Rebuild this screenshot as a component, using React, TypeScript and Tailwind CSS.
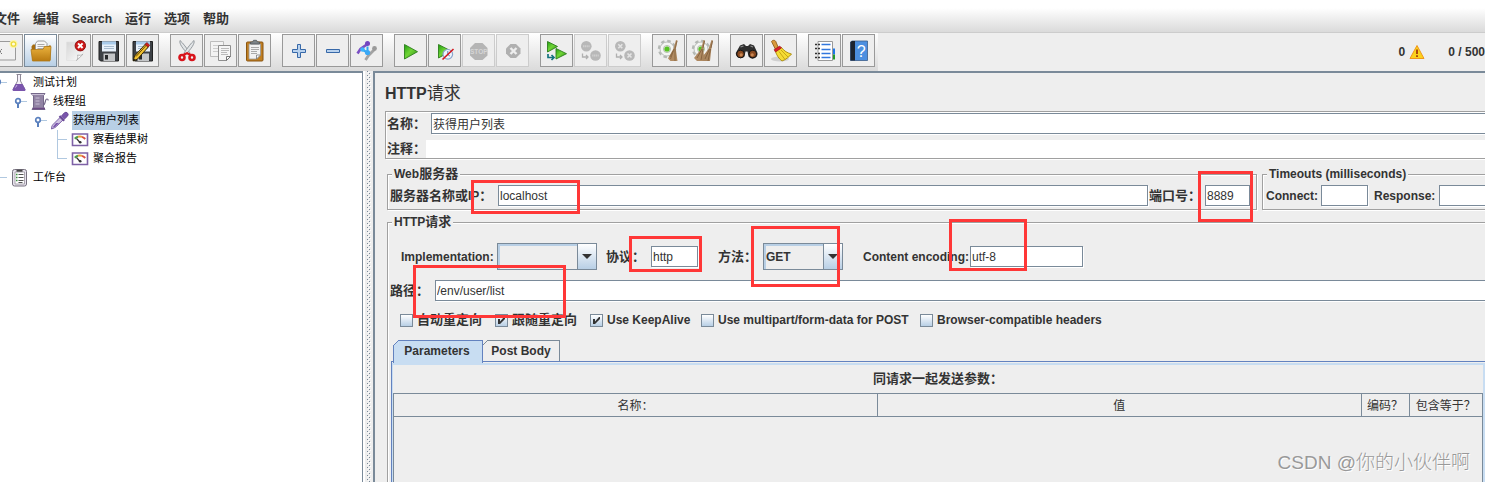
import { ReactNode } from "react";
import clsx from "clsx";

/* ---------- toolbar icons (23 x 23) ---------- */

function Svg({ children, size = 23 }: { children: ReactNode; size?: number }) {
  return (
    <svg width={size} height={size} viewBox={`0 0 ${size} ${size}`} fill="none" aria-hidden="true">
      {children}
    </svg>
  );
}

function Gradients() {
  return (
    <svg width="0" height="0" className="absolute" aria-hidden="true">
      <defs>
        <linearGradient id="green" x1="0" y1="0" x2="1" y2="1">
          <stop offset="0" stopColor="#1f9e10" />
          <stop offset="0.45" stopColor="#6fd435" />
          <stop offset="1" stopColor="#2f8f14" />
        </linearGradient>
        <linearGradient id="paper" x1="0" y1="0" x2="1" y2="1">
          <stop offset="0" stopColor="#d6d6d6" />
          <stop offset="1" stopColor="#fcfcfc" />
        </linearGradient>
        <linearGradient id="gold" x1="0" y1="0" x2="0" y2="1">
          <stop offset="0" stopColor="#e9b13d" />
          <stop offset="1" stopColor="#b97a10" />
        </linearGradient>
      </defs>
    </svg>
  );
}

function TemplatesIcon() {
  return (
    <Svg>
      <path d="M0 2.500h20.500v18.500H0z" fill="#f0f0f0" stroke="#9a9a9a" />
      <path d="M6.500 10v1M5.500 11.500v2M6.500 14v1" stroke="#777" />
      <circle cx="18.500" cy="5" r="4" fill="#fdf6a8" />
      <circle cx="18.500" cy="5" r="2.200" fill="#fffde0" stroke="#ecd93c" strokeWidth="1.300" />
    </Svg>
  );
}

function OpenIcon() {
  return (
    <Svg>
      <path d="M2.500 7.500 4 5.500h4v6h10v-4l3.500-1.500v15h-18z" fill="#a56c10" />
      <path d="M6.500 4.500 8.500 2h7l2.500 2.500v9h-11.500z" fill="#f6f6f6" stroke="#9a9a9a" />
      <path d="M8.500 5.500h7M8.500 7.500h8M8.500 9.500h8" stroke="#aaa" />
      <path d="M2 10.500h12l1.500-3h6.500L21 22H3.500z" fill="url(#gold)" stroke="#b07a18" strokeWidth="0.800" />
    </Svg>
  );
}

function CloseFileIcon() {
  return (
    <Svg>
      <path d="M3.500 3h16.500v12l-6 6.500H3.500z" fill="url(#paper)" stroke="#e2e2e2" strokeWidth="0.800" />
      <path d="M13.500 21.500c1.500-2 1.500-3.500 1-5.500 2 .6 3.800.3 5.500-.8z" fill="#fff" stroke="#aaa" strokeWidth="0.800" />
      <circle cx="17.300" cy="6.700" r="5.200" fill="#cf1717" stroke="#8e1010" />
      <path d="m15 4.400 4.600 4.600m0-4.600L15 9" stroke="#fff" strokeWidth="2" />
    </Svg>
  );
}

function Floppy() {
  return (
    <>
      <path d="M2 2.500h19.500V22H3.500L2 20.500z" fill="#3d4146" stroke="#222" />
      <path d="M5 2.500h14v10H5z" fill="#e8f1fa" />
      <path d="M5 2.500h14v3H5z" fill="#a9cbea" />
      <path d="M7 7.500h10M7 9.500h10" stroke="#a8bccf" />
      <path d="M6.500 14.500h11.500V22H6.500z" fill="#c4c6c8" />
      <path d="M8 16h3v4.500H8z" fill="#26282b" />
    </>
  );
}

function SaveIcon() {
  return (
    <Svg>
      <Floppy />
    </Svg>
  );
}

function SaveAsIcon() {
  return (
    <Svg>
      <Floppy />
      <path d="m2 22 1.600-5L14.500 5l3 2.700L6.600 20z" fill="#f1c232" stroke="#3a2b06" strokeWidth="1" />
      <path d="m5 17.500 10.500-11.500" stroke="#6b4a05" />
      <path d="m14 5.500 1.800-2 3 2.700-1.800 2z" fill="#cf1c1c" stroke="#701010" strokeWidth="0.600" />
      <path d="m2 22 .8-2.600 1.600 1.500z" fill="#111" />
    </Svg>
  );
}

function CutIcon() {
  return (
    <Svg>
      <path d="M5 1.500c-1 3 2.500 8 8.500 14l1.500-1.500C11.500 9 8 4 5 1.500z" fill="#e2e5e7" stroke="#8b9297" strokeWidth="0.900" />
      <path d="M19 1.500c1 3-2.500 8-8.500 14L9 14C12.500 9 16 4 19 1.500z" fill="#e2e5e7" stroke="#8b9297" strokeWidth="0.900" />
      <ellipse cx="7" cy="18.500" rx="2.500" ry="2.500" stroke="#d8141c" strokeWidth="2.600" />
      <ellipse cx="17" cy="18.500" rx="2.500" ry="2.500" stroke="#d8141c" strokeWidth="2.600" />
      <path d="m8 16 4-1.700 4 1.700" stroke="#d8141c" strokeWidth="2.200" />
    </Svg>
  );
}

function CopyIcon() {
  return (
    <Svg>
      <path d="M1.500 2.500h13v15h-13z" fill="#f3f3f3" stroke="#bdbdbd" />
      <path d="M4 6.500h7M4 9.500h5M4 12.500h5" stroke="#ccc" />
      <path d="M9.500 6.500h12v11l-4 4h-8z" fill="#f5f5f5" stroke="#8e8e8e" />
      <path d="M12 9.500h8M12 11.500h8M12 13.500h6M12 15.500h7" stroke="#bbb" />
      <path d="M17.500 21.500v-4h4z" fill="#fff" stroke="#777" />
    </Svg>
  );
}

function PasteIcon() {
  return (
    <Svg>
      <rect x="3.500" y="3" width="16.500" height="19" rx="1" fill="#c07f22" stroke="#8a5510" />
      <path d="M6 5h11.500v11l-4 4H6z" fill="#f2f2f2" stroke="#999" strokeWidth="0.800" />
      <path d="M8 8.500h8M8 10.500h8M8 12.500h6M8 14.500h6" stroke="#aaa" />
      <path d="M13.500 20v-4h4z" fill="#fff" stroke="#777" strokeWidth="0.800" />
      <path d="M7.500 5V3h2l1-1.700h3l1 1.700h2v2z" fill="#7d8488" stroke="#50575b" strokeWidth="0.800" />
    </Svg>
  );
}

function PlusIcon() {
  return (
    <Svg>
      <path d="M10.500 5.500h3v5h5v3h-5v5h-3v-5h-5v-3h5z" fill="#b9d2ee" stroke="#3768a8" />
    </Svg>
  );
}

function MinusIcon() {
  return (
    <Svg>
      <path d="M5.500 10.500h13v3h-13z" fill="#b9d2ee" stroke="#3768a8" />
    </Svg>
  );
}

function ToggleIcon() {
  return (
    <Svg>
      <path d="m2.500 14.500 3-4.500 7-5" stroke="#7a4fc4" strokeWidth="2.600" />
      <circle cx="12.500" cy="4.500" r="2.500" fill="#7344c0" />
      <path d="m10.500 21 3-4.500 6-6" stroke="#a3a3a3" strokeWidth="2.800" />
      <circle cx="19.500" cy="9.500" r="2.400" fill="#9a9a9a" />
      <path d="m7 10.500 5.500 3M12.500 7.500v6" stroke="#2fa4f2" strokeWidth="2" />
      <circle cx="7.500" cy="10.500" r="2.300" fill="#3db3fb" />
      <circle cx="12.500" cy="13.500" r="2.600" fill="#3aa8f5" />
    </Svg>
  );
}

function PlayIcon() {
  return (
    <Svg>
      <path d="M5.500 5.500v14.500L18.500 12.700z" fill="url(#green)" stroke="#2c7d1c" strokeWidth="0.900" />
    </Svg>
  );
}

function PlayNoTimerIcon() {
  return (
    <Svg>
      <path d="M5.500 5.500v13.500L18 12z" fill="url(#green)" stroke="#2c7d1c" strokeWidth="0.900" />
      <circle cx="14.800" cy="15.300" r="4.800" fill="#eef4fc" stroke="#8aa4cc" strokeWidth="1.200" />
      <path d="M14.800 12v3.500l2 1.500" stroke="#5b7db5" />
      <path d="M9.500 20.500 20.500 10" stroke="#d3141b" strokeWidth="1.600" />
    </Svg>
  );
}

function StopIcon() {
  return (
    <Svg>
      <path d="M8 4h7.500l5 5v7.500l-5 4.500H8l-5-4.500V9z" fill="#b5b5b5" />
      <text x="11.800" y="14.900" textAnchor="middle" fontSize="6.500" fontWeight="bold" fontFamily="Liberation Sans" fill="#d6d6d6">
        STOP
      </text>
    </Svg>
  );
}

function ShutdownIcon() {
  return (
    <Svg>
      <path d="M9.500 5h5.500l4.500 4.500v5L15 19H9.500L5 14.500v-5z" fill="#b0b0b0" />
      <path d="m9.500 9 6 6m0-6-6 6" stroke="#eee" strokeWidth="2.400" />
    </Svg>
  );
}

function RemoteStartIcon() {
  return (
    <Svg>
      <path d="M2.500 2.500v10.500L12.500 7.500z" fill="url(#green)" stroke="#2c7d1c" strokeWidth="0.900" />
      <path d="M11 9.500v10.500L21.500 14.700z" fill="url(#green)" stroke="#2c7d1c" strokeWidth="0.900" />
      <path d="M3 15v3.500h5M6.500 16l2.500 2.500L6.500 21" stroke="#15737f" strokeWidth="1.700" />
    </Svg>
  );
}

function RemoteStopIcon({ cross }: { cross?: boolean }) {
  return (
    <Svg>
      <circle cx="7.300" cy="7.300" r="5.300" fill="#b8b8b8" />
      <circle cx="16.500" cy="16.500" r="5.300" fill="#b8b8b8" />
      {cross ? (
        <path d="m5.300 5.300 4 4m0-4-4 4M14.500 14.500l4 4m0-4-4 4" stroke="#e4e4e4" strokeWidth="1.600" />
      ) : (
        <path d="M4 7.300h6.600M13.200 16.500h6.600" stroke="#cfcfcf" strokeWidth="2" strokeDasharray="1.300 0.500" />
      )}
      <path d="M3.500 14.500v3.500h5M7 16l2 2-2 2" stroke="#b0b0b0" strokeWidth="1.300" />
    </Svg>
  );
}

function Gear() {
  return (
    <>
      <circle cx="10" cy="10" r="8" stroke="#b4b8b4" strokeWidth="2.400" strokeDasharray="3.500 2.780" />
      <circle cx="10" cy="10" r="7" fill="#f4f5f3" stroke="#b4b8b4" strokeWidth="0.900" />
      <circle cx="10" cy="10" r="3.600" fill="#dde5d8" stroke="#a5ad9f" strokeWidth="0.700" />
      <circle cx="10" cy="10" r="2.600" fill="#58c322" />
    </>
  );
}

function ClearIcon() {
  return (
    <Svg>
      <Gear />
      <path d="m19 1 1.500.5-1.700 8.500 1.700 12h-7L11 19.500 16.500 9.500z" fill="#b08a62" />
      <path d="m17 10-3.500 10M18 10v12M16 12l-3 6M20 2l-2 8" stroke="#7d5b38" strokeWidth="0.700" />
    </Svg>
  );
}

function ClearAllIcon() {
  return (
    <Svg>
      <Gear />
      <path d="m12.500 1 1.500.5-1.700 8.500 1.200 12H6L3 19l7-9z" fill="#b08a62" />
      <path d="m20.500 1 1.500.5-1.700 8.500L19 22h-7l-1.500-3 7-9z" fill="#a9845d" />
      <path d="m11 10-5 9M12 10l-2 11M18.500 10 14 20M19.500 10 17 22M13.500 2 12 9M21.500 2 20 9" stroke="#775534" strokeWidth="0.700" />
    </Svg>
  );
}

function SearchIcon() {
  return (
    <Svg>
      <path d="M5 6.500 9 5l2 2h2l2-2 4 1.500L22.500 14a5 5 0 0 1-9 3.500l-1-5h-2l-1 5A5 5 0 0 1 .8 14z" fill="#2e2e2e" />
      <path d="m5.500 8 3-1M18 8l-2.500-1" stroke="#8d8d8d" strokeWidth="1.200" />
      <circle cx="5.500" cy="15" r="3.800" fill="#8a4a20" stroke="#151515" />
      <circle cx="17.800" cy="15" r="3.800" fill="#8a4a20" stroke="#151515" />
      <circle cx="6.200" cy="15.800" r="1.600" fill="#c98752" />
      <circle cx="17.200" cy="15.800" r="1.600" fill="#c98752" />
    </Svg>
  );
}

function BroomIcon() {
  return (
    <Svg>
      <ellipse cx="11" cy="20" rx="9" ry="2.500" fill="#cfcfcf" />
      <path d="M2.500 2.500c1.500-2 4-1.300 4.500.5l2.500 6-3 1.500z" fill="#d99a3c" stroke="#8a5510" strokeWidth="0.800" />
      <path d="M6.500 12.500 12.500 8.500c2.500 3.500 6 5.500 10 6.500-2.500 3-5.500 5.500-9.500 7-3-2-5.500-6-6.500-9.500z" fill="#f5dc35" stroke="#a88a0c" strokeWidth="0.900" />
      <path d="m10 12.500 6 8M12 11l7 7" stroke="#c9a814" />
      <path d="m5 10.700 5.700-3.700 1.800 2-6 4z" fill="#d8202a" stroke="#9c1018" strokeWidth="0.600" />
    </Svg>
  );
}

function FunctionHelperIcon() {
  return (
    <Svg>
      <path d="M19 9.500h3v6h-3z" fill="#1d76e8" />
      <path d="M19 15.500h3v5h-3z" fill="#249a2c" />
      <path d="M5 2.500h14.500v19H5z" fill="#fff" stroke="#999" />
      <path d="M8.500 5.500h9M8.500 10.500h9M8.500 14.500h9M8.500 18.500h9" stroke="#3277dd" strokeWidth="1.300" />
      <path d="M2 5.500h5M2 9.500h5M2 14.500h5M2 18.500h5" stroke="#333" strokeWidth="1.600" strokeDasharray="2 1" />
    </Svg>
  );
}

function HelpIcon() {
  return (
    <Svg>
      <path d="M3.500 3 5 2h15.500v19.500H3.500z" fill="#4c8fe0" stroke="#3b5d8a" strokeWidth="0.800" />
      <path d="M3.500 3 5 2h3v19.500H3.500z" fill="#1c2430" />
      <text x="14.200" y="17.500" textAnchor="middle" fontSize="16" fontFamily="Liberation Sans" fill="#fff">
        ?
      </text>
    </Svg>
  );
}

interface Tool {
  name: string;
  icon: ReactNode;
  active?: boolean;
  disabled?: boolean;
}

const toolGroups: Tool[][] = [
  [
    { name: "Templates", icon: <TemplatesIcon /> },
    { name: "Open", icon: <OpenIcon />, active: true },
    { name: "Close", icon: <CloseFileIcon /> },
    { name: "Save", icon: <SaveIcon /> },
    { name: "Save as", icon: <SaveAsIcon /> },
  ],
  [
    { name: "Cut", icon: <CutIcon /> },
    { name: "Copy", icon: <CopyIcon /> },
    { name: "Paste", icon: <PasteIcon /> },
  ],
  [
    { name: "Expand all", icon: <PlusIcon /> },
    { name: "Collapse all", icon: <MinusIcon /> },
    { name: "Toggle", icon: <ToggleIcon /> },
  ],
  [
    { name: "Start", icon: <PlayIcon /> },
    { name: "Start no pauses", icon: <PlayNoTimerIcon /> },
    { name: "Stop", icon: <StopIcon />, disabled: true },
    { name: "Shutdown", icon: <ShutdownIcon />, disabled: true },
  ],
  [
    { name: "Remote start all", icon: <RemoteStartIcon /> },
    { name: "Remote stop all", icon: <RemoteStopIcon />, disabled: true },
    { name: "Remote shutdown all", icon: <RemoteStopIcon cross />, disabled: true },
  ],
  [
    { name: "Clear", icon: <ClearIcon /> },
    { name: "Clear all", icon: <ClearAllIcon /> },
  ],
  [
    { name: "Find", icon: <SearchIcon /> },
    { name: "Reset search", icon: <BroomIcon /> },
  ],
  [
    { name: "Function helper", icon: <FunctionHelperIcon /> },
    { name: "Help", icon: <HelpIcon /> },
  ],
];

function MenuBar() {
  const items = ["文件", "编辑", "Search", "运行", "选项", "帮助"];
  return (
    <nav className="flex h-[33px] shrink-0 items-center gap-[13px] border-b border-[#ccc] bg-linear-to-b from-white from-25% to-[#dadada] pt-[6px]">
      {items.map((item, i) => (
        <button
          key={item}
          className={clsx("shrink-0 font-bold", item === "Search" ? "text-[12px]" : "text-[13px]", i === 0 && "-ml-[6px]")}
        >
          {item}
        </button>
      ))}
    </nav>
  );
}

function ToolBar() {
  return (
    <div className="flex h-[38px] shrink-0 items-center justify-between">
      <div className="-ml-[10px] flex h-full shrink-0 gap-[11px] bg-linear-to-b from-white to-[#dadada] pt-px pr-[3px]">
        {toolGroups.map((group, i) => (
          <div key={i} className="flex gap-px">
            {group.map((tool) => (
              <button
                key={tool.name}
                title={tool.name}
                disabled={tool.disabled}
                className={clsx(
                  "flex size-[33px] items-center justify-center border",
                  tool.active && "border-[#7a8a99] bg-linear-to-b from-white to-[#b8cfe5]",
                  tool.disabled && "border-[#ccc] bg-[#eee]",
                  !tool.active && !tool.disabled && "border-[#999] bg-[#eee]"
                )}
              >
                {tool.icon}
              </button>
            ))}
          </div>
        ))}
      </div>
      <div className="flex shrink-0 items-center text-[12px] font-bold">
        <span>0</span>
        <svg width="16" height="16" viewBox="0 0 16 16" className="mr-[23px] ml-1" aria-hidden="true">
          <path d="M8 1.500 15 14.500H1z" fill="#fbd21c" stroke="#f0971a" strokeLinejoin="round" />
          <path d="M8 5.500v4.500M8 11.300v1.700" stroke="#a8420c" strokeWidth="1.900" />
        </svg>
        <span>0 / 500</span>
      </div>
    </div>
  );
}

/* ---------- test plan tree ---------- */

function FlaskIcon() {
  return (
    <Svg size={19}>
      <path d="M6.500 1.500h5M7.500 2v6L3 16.500h12L10.500 8V2" fill="#f4f0f8" stroke="#8d8896" />
      <path d="M5.500 11h7l3 5.500c0 1-.5 1.500-1.500 1.500H4c-1 0-1.500-.5-1.500-1.500z" fill="#7a55ac" />
      <path d="M5.500 14.500 7 12" stroke="#c7b2e4" />
    </Svg>
  );
}

function BeakerIcon() {
  return (
    <Svg size={19}>
      <path d="M1 1.500h14l-1.500 2V15l1.500 2.500H2L3.500 15V4z" fill="#9284a4" stroke="#75688a" />
      <path d="M2 2.500h12M5.500 6h4M5.500 9h4M5.500 12h4" stroke="#c9bfd6" />
      <path d="M3 16.500h12" stroke="#6d4b84" strokeWidth="1.500" />
      <path d="M13 13c3 0 1.500-6 4-6 .8 0 1.200.6 1.200 1.500" stroke="#75688a" strokeWidth="1.200" />
    </Svg>
  );
}

function PipetteIcon() {
  return (
    <Svg size={19}>
      <path d="M1.500 18c0-3 1-4 2-5l7-7 2.700 2.700-7 7c-1 1-2.500 1.300-4.700 2.300z" fill="#cfc2e2" stroke="#7d62a8" />
      <path d="m2.500 16.500 3.500-4.500 3 0-4 4z" fill="#7a55ac" />
      <path d="m9.500 5 4.700 4.700" stroke="#6a4a98" strokeWidth="2.200" />
      <path d="m11.500 5 3-3.300a2.300 2.300 0 0 1 3.200 3.200L14.500 8z" fill="#7a55ac" stroke="#6a4a98" />
    </Svg>
  );
}

function ReportIcon() {
  return (
    <Svg size={19}>
      <path d="M2.500 4h15v11.500h-15z" fill="#fff" stroke="#7e61a6" strokeWidth="1.600" />
      <path d="M4.800 8.800C6 7.500 6.800 7 8 6.700" stroke="#4c9c4a" strokeWidth="2" />
      <path d="M8 6.800c1.500-.4 3-.3 4 .1" stroke="#e6a03a" strokeWidth="2" />
      <path d="M12 6.900c1.500.5 2.300 1.100 3.200 2.100" stroke="#db5244" strokeWidth="2" />
      <path d="m6.500 8.500 3.500 4" stroke="#333" strokeWidth="1.200" />
      <circle cx="10.200" cy="12.300" r="1.300" fill="#333" />
    </Svg>
  );
}

function WorkbenchIcon() {
  return (
    <Svg size={19}>
      <rect x="2.500" y="1.500" width="14" height="16.500" rx="2" fill="#e6e2ec" stroke="#77717f" />
      <path d="M5 4h9.500v12H5z" fill="#fff" stroke="#99949f" strokeWidth="0.800" />
      <path d="M6.500 2.700h6" stroke="#444" strokeWidth="2" />
      <path d="M8.500 6.500h5M8.500 9.500h5M8.500 12.500h5M8.500 14.500h4" stroke="#555" />
      <path d="M6 6.500h1.500M6 9.500h1.500M6 12.500h1.500" stroke="#3e9440" strokeWidth="1.400" />
    </Svg>
  );
}

type Branch = "handle" | "tee" | "corner" | "line";

function Connector({ kind }: { kind: Branch }) {
  return (
    <svg width="20" height="19" viewBox="0 0 20 19" fill="none" className="shrink-0" aria-hidden="true">
      <path d="M8 9.500h9" stroke="#b0c8e0" />
      {kind === "tee" && <path d="M7.500 0v19" stroke="#b0c8e0" />}
      {kind === "corner" && <path d="M7.500 0v10" stroke="#b0c8e0" />}
      {kind === "handle" && (
        <>
          <path d="M8 11v5" stroke="#5a80be" strokeWidth="2" />
          <circle cx="8" cy="9" r="2.300" fill="#fff" stroke="#5a80be" strokeWidth="1.700" />
        </>
      )}
    </svg>
  );
}

const nodes: { label: string; indent: string; branch: Branch; icon: ReactNode; selected?: boolean }[] = [
  { label: "测试计划", indent: "-ml-[10px]", branch: "handle", icon: <FlaskIcon /> },
  { label: "线程组", indent: "ml-[10px]", branch: "handle", icon: <BeakerIcon /> },
  { label: "获得用户列表", indent: "ml-[30px]", branch: "handle", icon: <PipetteIcon />, selected: true },
  { label: "察看结果树", indent: "ml-[50px]", branch: "tee", icon: <ReportIcon /> },
  { label: "聚合报告", indent: "ml-[50px]", branch: "corner", icon: <ReportIcon /> },
  { label: "工作台", indent: "-ml-[10px]", branch: "line", icon: <WorkbenchIcon /> },
];

function TestPlanTree() {
  return (
    <ul className="w-[363px] shrink-0 overflow-hidden border-t-2 border-r border-[#7a8a99] bg-white text-[11px] text-black">
      {nodes.map((node) => (
        <li key={node.label} className={clsx("flex h-[19px] items-center", node.indent)}>
          <Connector kind={node.branch} />
          {node.icon}
          <span className={clsx("ml-[3px] px-px leading-[19px]", node.selected && "bg-[#b8cfe5]")}>{node.label}</span>
        </li>
      ))}
    </ul>
  );
}

function SplitDivider() {
  return (
    <div className="flex w-[10px] shrink-0 justify-center border-l-2 border-white">
      <svg width="4" height="100%" aria-hidden="true">
        <defs>
          <pattern id="grip" width="4" height="4" patternUnits="userSpaceOnUse">
            <path d="M0 0h1v1H0zM2 2h1v1H2z" fill="#7a8a99" />
            <path d="M1 1h1v1H1zM3 3h1v1H3z" fill="#fff" />
          </pattern>
        </defs>
        <rect width="4" height="100%" fill="url(#grip)" />
      </svg>
    </div>
  );
}

/* ---------- form parts ---------- */

const etched = "border border-[#a0a0a0] shadow-[1px_1px_0_#fff,inset_1px_1px_0_#fff]";
const field = "h-[21px] min-w-0 border border-[#7a8a99] bg-white px-px text-[12px] outline-none shadow-[1px_1px_0_#fff]";

function Zh({ children }: { children: ReactNode }) {
  return <span className="text-[13px]">{children}</span>;
}

function Group({ legend, className, children }: { legend: ReactNode; className?: string; children: ReactNode }) {
  return (
    <fieldset className={clsx("min-w-0", etched, className)}>
      <legend className="ml-1 bg-[#eee] px-[2px] leading-[16px] font-bold">{legend}</legend>
      {children}
    </fieldset>
  );
}

function Combo({ id, className, options }: { id: string; className: string; options: string[] }) {
  return (
    <div className={clsx("relative h-[27px] shrink-0", className)}>
      <select
        id={id}
        className="size-full appearance-none border border-[#7a8a99] bg-[#eee] pr-5 pl-[2px] text-[12px] font-bold shadow-[inset_1px_1px_0_#b8cfe5,inset_2px_2px_0_#b8cfe5] outline-none"
      >
        {options.map((o) => (
          <option key={o}>{o}</option>
        ))}
      </select>
      <span className="pointer-events-none absolute inset-y-0 right-0 flex w-5 items-center justify-center border border-[#7a8a99] bg-linear-to-b from-white to-[#b8cfe5]">
        <svg width="10" height="5" viewBox="0 0 10 5" aria-hidden="true">
          <path d="M0 0h10L5 5z" fill="#333" />
        </svg>
      </span>
    </div>
  );
}

function Check({ label, checked, className }: { label: string; checked?: boolean; className?: string }) {
  return (
    <label className={clsx("flex shrink-0 items-center font-bold whitespace-nowrap", className)}>
      <span className="relative mr-1 size-[13px]">
        <input
          type="checkbox"
          defaultChecked={checked}
          className="peer block size-[13px] appearance-none border border-[#7a8a99] bg-linear-to-b from-white to-[#b8cfe5]"
        />
        <svg
          width="13"
          height="13"
          viewBox="0 0 13 13"
          className="pointer-events-none absolute inset-0 hidden peer-checked:block"
          aria-hidden="true"
        >
          <path d="M3 5h2v2.500L9 3h1v2L5 10H3z" fill="#333" />
        </svg>
      </span>
      {label}
    </label>
  );
}

function Tab({ label, active, className }: { label: string; active?: boolean; className: string }) {
  return (
    <button
      type="button"
      role="tab"
      aria-selected={!!active}
      className={clsx(
        "relative border-t border-r font-bold",
        active ? "z-10 -mb-[2px] border-l border-[#6382bf] bg-[#c8ddf2] pr-[2px] pb-[2px]" : "border-[#7a8a99] bg-[#eee]",
        className
      )}
    >
      <svg width="6" height="6" viewBox="0 0 6 6" className="absolute -top-px -left-px" aria-hidden="true">
        <path d="M0 0h6L0 6z" fill="#eee" />
        <path d="M0 6 6 0" stroke={active ? "#6382bf" : "#7a8a99"} />
      </svg>
      {label}
    </button>
  );
}

function ParameterTabs() {
  return (
    <div className="mt-[13px] ml-[3px] flex flex-1 flex-col">
      <div role="tablist" className="flex h-[21px] pl-[2px]">
        <Tab label="Parameters" active className="w-[90px]" />
        <Tab label="Post Body" className="w-[77px]" />
      </div>
      <div className="flex flex-1 flex-col border-t border-l border-[#6382bf] pt-px">
        <div className="flex flex-1 flex-col border-2 border-b-0 border-l border-[#c8ddf2]">
          <h2 className="text-center text-[13px] leading-[28px] font-bold">同请求一起发送参数：</h2>
          <div className="flex-1 border-x border-[#7a8a99]">
            <table className="w-full table-fixed border-collapse text-[12px]">
              <thead>
                <tr className="h-[23px] border-y border-[#7a8a99] leading-[20px]">
                  <th className="border-r border-[#7a8a99] pt-[2px] font-normal">名称：</th>
                  <th className="border-r border-[#7a8a99] pt-[2px] font-normal">值</th>
                  <th className="w-[48px] border-r border-[#7a8a99] pt-[2px] font-normal">编码？</th>
                  <th className="w-[73px] pt-[2px] font-normal">包含等于？</th>
                </tr>
              </thead>
            </table>
          </div>
        </div>
      </div>
    </div>
  );
}

function HttpRequestForm() {
  return (
    <form className="flex min-w-0 flex-1 flex-col overflow-hidden border-t-2 border-l-2 border-[#7a8a99] pl-[10px] text-[12px]">
      <h1 className="pt-[4px] text-[16px] leading-[34px]">
        <b>HTTP</b>
        <span className="text-[17px]">请求</span>
      </h1>

      <div className={clsx("border-r-0 pl-px", etched)}>
        <div className="mt-px flex items-center">
          <label htmlFor="name" className="w-[44px] shrink-0 text-[13px] font-bold whitespace-nowrap">
            名称：
          </label>
          <input id="name" defaultValue="获得用户列表" className={clsx(field, "flex-1 border-r-0")} />
        </div>
        <div className="mt-[6px] flex items-center">
          <label htmlFor="comment" className="w-[39px] shrink-0 text-[13px] leading-[18px] font-bold whitespace-nowrap">
            注释：
          </label>
          <input id="comment" className="h-[18px] min-w-0 flex-1 bg-white px-1 outline-none" />
        </div>
      </div>

      <div className="mt-[7px] ml-[2px] flex gap-[5px]">
        <Group legend={<>Web<Zh>服务器</Zh></>} className="flex-1">
          <div className="flex items-center pt-[3px] pr-[6px] pb-[3px] pl-[2px]">
            <label htmlFor="server" className="w-[108px] shrink-0 font-bold whitespace-nowrap">
              <Zh>服务器名称或</Zh>IP<Zh>：</Zh>
            </label>
            <input id="server" defaultValue="localhost" className={clsx(field, "flex-1")} />
            <label htmlFor="port" className="w-[57px] shrink-0 pl-px text-[13px] font-bold whitespace-nowrap">
              端口号：
            </label>
            <input id="port" defaultValue="8889" className={clsx(field, "w-[45px] shrink-0")} />
          </div>
        </Group>
        <Group legend="Timeouts (milliseconds)" className="w-[223px] shrink-0 border-r-0">
          <div className="flex items-center pt-[3px] pb-[3px] pl-[3px] font-bold">
            <label htmlFor="connect" className="w-[55px] shrink-0">Connect:</label>
            <input id="connect" className={clsx(field, "w-[47px] shrink-0")} />
            <label htmlFor="response" className="w-[71px] shrink-0 pl-[6px]">Response:</label>
            <input id="response" className={clsx(field, "flex-1 border-r-0")} />
          </div>
        </Group>
      </div>

      <Group legend={<>HTTP<Zh>请求</Zh></>} className="mt-1 ml-[2px] flex flex-1 flex-col border-r-0 border-b-0">
        <div className="flex items-center pt-[13px] pl-[13px] font-bold">
          <label htmlFor="impl" className="w-[96px] shrink-0">Implementation:</label>
          <Combo id="impl" className="w-[100px]" options={["", "HttpClient4", "Java"]} />
          <label htmlFor="protocol" className="w-[54px] shrink-0 pl-[9px] text-[13px] whitespace-nowrap">协议：</label>
          <input id="protocol" defaultValue="http" className={clsx(field, "w-[47px] font-normal")} />
          <label htmlFor="method" className="w-[65px] shrink-0 pl-[20px] text-[13px] whitespace-nowrap">方法：</label>
          <Combo id="method" className="w-[80px]" options={["GET", "POST", "PUT", "DELETE"]} />
          <label htmlFor="encoding" className="w-[127px] shrink-0 pl-[20px]">Content encoding:</label>
          <input id="encoding" defaultValue="utf-8" className={clsx(field, "w-[113px] font-normal")} />
        </div>

        <div className="mt-[10px] flex items-center pl-[2px]">
          <label htmlFor="path" className="w-[45px] shrink-0 text-[13px] font-bold whitespace-nowrap">路径：</label>
          <input id="path" defaultValue="/env/user/list" className={clsx(field, "flex-1 border-r-0")} />
        </div>

        <div className="mt-[12px] flex h-[14px] items-center pl-[12px]">
          <Check label="自动重定向" className="w-[95px] text-[13px]" />
          <Check label="跟随重定向" checked className="w-[95px] text-[13px]" />
          <Check label="Use KeepAlive" checked className="w-[111px]" />
          <Check label="Use multipart/form-data for POST" className="w-[219px]" />
          <Check label="Browser-compatible headers" />
        </div>

        <ParameterTabs />
      </Group>
    </form>
  );
}

/* Red frames drawn over the fields that have to be filled in */
const marks = [
  "left-[471px] top-[180px] h-[34px] w-[109px]",
  "left-[1198px] top-[171px] h-[51px] w-[55px]",
  "left-[629px] top-[236px] h-[36px] w-[73px]",
  "left-[751px] top-[226px] h-[61px] w-[89px]",
  "left-[949px] top-[219px] h-[52px] w-[78px]",
  "left-[413px] top-[265px] h-[53px] w-[153px]",
];

export default function App() {
  return (
    <div className="relative flex h-screen flex-col overflow-hidden bg-[#eee] font-['Liberation_Sans','Noto_Sans_CJK_SC',sans-serif] text-[#333]">
      <Gradients />
      <MenuBar />
      <ToolBar />
      <div className="flex min-h-0 flex-1">
        <TestPlanTree />
        <SplitDivider />
        <HttpRequestForm />
      </div>

      {marks.map((mark) => (
        <div key={mark} className={clsx("pointer-events-none absolute border-3 border-[#ff3737]", mark)} />
      ))}
      <div className="pointer-events-none absolute right-[15px] bottom-[6px] text-[19px] leading-[26px] font-light text-[#999] [text-shadow:1px_1px_0_#fff]">
        CSDN @你的小伙伴啊
      </div>
    </div>
  );
}
